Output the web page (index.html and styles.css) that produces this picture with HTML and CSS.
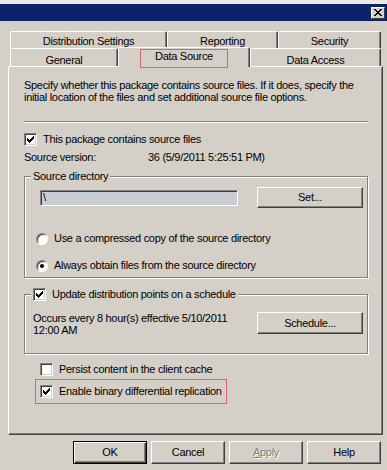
FILE: index.html
```html
<!DOCTYPE html>
<html lang="en">
<head>
  <meta charset="UTF-8" />
  <title>Package Properties</title>
  <link rel="stylesheet" href="styles.css">
</head>
<body>

  <div class="window">
    <div class="titlebar">
      <span class="close-btn">
        <svg width="8" height="7" viewBox="0 0 8 7" shape-rendering="crispEdges">
          <path d="M0 0h2v1h-2zM6 0h2v1h-2zM1 1h2v1h-2zM5 1h2v1h-2zM2 2h4v1h-4zM3 3h2v1h-2zM2 4h4v1h-4zM1 5h2v1h-2zM5 5h2v1h-2zM0 6h2v1h-2zM6 6h2v1h-2z" fill="#000"/>
        </svg>
      </span>
    </div>

    <div class="tabs">
      <div class="tab-row back">
        <div class="tab w-dist">Distribution Settings</div>
        <div class="tab w-report">Reporting</div>
        <div class="tab w-security">Security</div>
      </div>
      <div class="tab-row front">
        <div class="tab w-general">General</div>
        <div class="tab w-source selected"><span class="mark">Data Source</span></div>
        <div class="tab w-access">Data Access</div>
      </div>
    </div>

    <div class="panel">
      <p class="intro">Specify whether this package contains source files. If it does, specify the initial location of the files and set additional source file options.</p>
      <div class="separator"></div>

      <label class="check first">
        <span class="box checked"></span>
        This package contains source files
      </label>

      <div class="version">
        <span class="version-label">Source version:</span>
        <span>36 (5/9/2011 5:25:51 PM)</span>
      </div>

      <fieldset class="group dir-group">
        <legend>Source directory</legend>
        <div class="dir-row">
          <div class="path">\</div>
          <button class="btn wide">Set...</button>
        </div>
        <label class="radio first-radio"><span class="dot"></span>Use a compressed copy of the source directory</label>
        <label class="radio second-radio"><span class="dot on"></span>Always obtain files from the source directory</label>
      </fieldset>

      <fieldset class="group sched-group">
        <legend><span class="box checked"></span>Update distribution points on a schedule</legend>
        <div class="sched-row">
          <p class="sched-text">Occurs every 8 hour(s) effective 5/10/2011<br>12:00 AM</p>
          <button class="btn wide">Schedule...</button>
        </div>
      </fieldset>

      <label class="check persist">
        <span class="box"></span>
        Persist content in the client cache
      </label>
      <label class="check binary">
        <span class="box checked"></span>
        Enable binary differential replication
      </label>
    </div>

    <div class="buttons">
      <button class="btn default">OK</button>
      <button class="btn">Cancel</button>
      <button class="btn disabled"><u>A</u>pply</button>
      <button class="btn">Help</button>
    </div>
  </div>

</body>
</html>
```

FILE: styles.css
```css
:root {
  --face: #d4d0c8;
  --light: #ffffff;
  --shadow: #808080;
  --dark: #404040;
  --title: #0a246a;
  --mark: #d8646c;
}

* {
  margin: 0;
  padding: 0;
  box-sizing: border-box;
}

body {
  background: var(--face);
  font-family: "Liberation Sans", Arial, sans-serif;
  font-size: 11px;
  letter-spacing: -0.3px;
  line-height: 13px;
  color: #000;
}

.window {
  width: 387px;
  height: 470px;
  overflow: hidden;
  border-top: 4px solid #ebe9e5;
}

/* title bar */
.titlebar {
  height: 17px;
  background: var(--title);
  display: flex;
  align-items: center;
  justify-content: flex-end;
  padding-right: 2px;
}

.close-btn {
  width: 14px;
  height: 12px;
  background: var(--face);
  border: 1px solid;
  border-color: var(--light) var(--dark) var(--dark) var(--light);
  display: flex;
  align-items: center;
  justify-content: center;
}

.close-btn svg {
  display: block;
}

/* tabs */
.tabs {
  margin-top: 10px;
  padding: 0 6px 0 10px;
}

.tab-row {
  display: flex;
}

.tab-row.back {
  height: 17px;
}

.tab-row.front {
  height: 18px;
}

.tab {
  background: var(--face);
  border-top: 1px solid var(--light);
  border-left: 1px solid var(--light);
  border-right: 1px solid var(--dark);
  box-shadow: inset -1px 0 0 var(--shadow);
  border-radius: 2px 2px 0 0;
  text-align: center;
  padding-top: 3px;
}

.front .tab {
  padding-top: 5px;
}

.w-dist { width: 157px; }
.w-report { width: 111px; }
.w-security { width: 103px; }
.w-general { width: 108px; }
.w-source { width: 132px; }
.w-access { width: 131px; }

.tab.selected {
  position: relative;
  margin-top: -1px;
  height: 20px;
  padding-top: 0;
}

.mark {
  display: inline-block;
  border: 1px solid var(--mark);
  padding: 1px 14px 6px;
  line-height: 10px;
  margin-top: 1px;
}

/* panel */
.panel {
  margin: 0 4px 0 8px;
  height: 369px;
  border: 1px solid;
  border-color: var(--light) var(--dark) var(--dark) var(--light);
  box-shadow: inset -1px -1px 0 var(--shadow);
  padding: 12px 14px 0 15px;
}

.intro {
  line-height: 12px;
}

.separator {
  margin-top: 18px;
  height: 2px;
  border-top: 1px solid var(--shadow);
  border-bottom: 1px solid var(--light);
}

.check {
  display: flex;
  align-items: center;
  gap: 6px;
  height: 13px;
}

.check.first {
  margin-top: 10px;
}

.box {
  width: 13px;
  height: 13px;
  flex: none;
  background: var(--light);
  border: 1px solid;
  border-color: var(--shadow) var(--light) var(--light) var(--shadow);
  box-shadow: inset 1px 1px 0 var(--dark), inset -1px -1px 0 var(--face);
  display: inline-block;
}

.box.checked {
  background: var(--light) url("data:image/svg+xml,%3Csvg xmlns='http://www.w3.org/2000/svg' width='7' height='7' shape-rendering='crispEdges'%3E%3Cpath d='M6 0h1v3h-1zM5 1h1v3h-1zM4 2h1v3h-1zM3 3h1v3h-1zM2 4h1v3h-1zM1 3h1v3h-1zM0 2h1v3h-1z' fill='%23000'/%3E%3C/svg%3E") no-repeat 2px 2px;
}

.version {
  display: flex;
  margin-top: 5px;
}

.version-label {
  width: 124px;
}

/* group boxes */
.group {
  border: 1px solid var(--shadow);
  box-shadow: 1px 1px 0 var(--light), inset 1px 1px 0 var(--light);
  padding: 0 4px 0 6px;
}

.group legend {
  background: var(--face);
  padding: 0 2px;
  line-height: 13px;
}

.dir-group {
  margin-top: 6px;
  padding-bottom: 5px;
}

.dir-row {
  display: flex;
  align-items: center;
  justify-content: space-between;
  height: 21px;
  margin: 4px 0 0 9px;
}

.path {
  width: 198px;
  height: 16px;
  background: #c8ccd4;
  border: 1px solid;
  border-color: var(--shadow) var(--light) var(--light) var(--shadow);
  box-shadow: inset 1px 1px 0 var(--dark);
  padding-left: 2px;
  line-height: 13px;
}

.radio {
  display: flex;
  align-items: center;
  gap: 6px;
  height: 13px;
  margin-left: 5px;
}

.first-radio {
  margin-top: 24px;
}

.second-radio {
  margin-top: 14px;
}

.dot {
  width: 12px;
  height: 12px;
  flex: none;
  border-radius: 50%;
  background: var(--light);
  border: 1px solid;
  border-color: var(--shadow) var(--light) var(--light) var(--shadow);
  box-shadow: inset 1px 1px 0 var(--dark);
  display: flex;
  align-items: center;
  justify-content: center;
}

.dot.on::after {
  content: "";
  width: 4px;
  height: 4px;
  border-radius: 50%;
  background: #000;
}

.sched-group {
  margin-top: 10px;
  padding-bottom: 17px;
}

.sched-group legend {
  display: flex;
  align-items: center;
  gap: 6px;
}

.sched-row {
  display: flex;
  justify-content: space-between;
  align-items: flex-start;
  margin: 11px 0 0 2px;
}

.sched-text {
  line-height: 12px;
}

/* buttons */
.btn {
  font: inherit;
  letter-spacing: inherit;
  color: #000;
  background: var(--face);
  border: 1px solid;
  border-color: var(--light) var(--dark) var(--dark) var(--light);
  box-shadow: inset -1px -1px 0 var(--shadow);
  width: 74px;
  height: 23px;
}

.btn.wide {
  width: 106px;
  height: 21px;
}

.sched-row .btn.wide {
  height: 22px;
}

.btn.default {
  border-color: #000;
  box-shadow: inset 1px 1px 0 var(--light), inset -1px -1px 0 var(--dark), inset -2px -2px 0 var(--shadow);
}

.btn.disabled {
  color: var(--shadow);
  text-shadow: 1px 1px 0 var(--light);
}

.check.persist {
  margin: 9px 0 0 16px;
}

.check.binary {
  margin: 3px 0 0 11px;
  width: 192px;
  height: 25px;
  border: 1px solid var(--mark);
  padding-left: 4px;
}

.buttons {
  display: flex;
  justify-content: flex-end;
  gap: 4px;
  margin-top: 6px;
  padding-right: 6px;
}
```
